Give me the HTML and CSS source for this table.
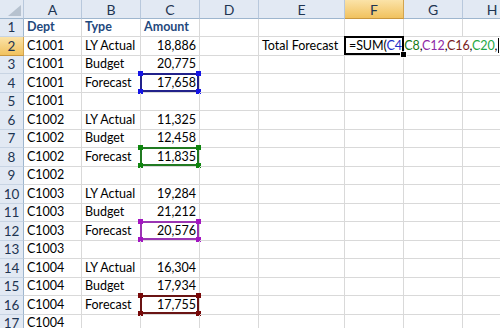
FILE: index.html
```html
<!DOCTYPE html>
<html lang="en">
<head>
    <meta charset="UTF-8">
    <title>Total Forecast</title>
    <link rel="stylesheet" href="styles.css">
</head>
<body>
    <div class="sheet">
        <div class="row head">
            <div class="corner"><span class="tri"></span></div>
            <div class="ch">A</div>
            <div class="ch">B</div>
            <div class="ch">C</div>
            <div class="ch">D</div>
            <div class="ch">E</div>
            <div class="ch on">F</div>
            <div class="ch">G</div>
            <div class="ch">H</div>
        </div>
        <div class="row">
            <div class="rh">1</div>
            <div class="c bold">Dept</div>
            <div class="c bold">Type</div>
            <div class="c bold">Amount</div>
            <div class="c"></div><div class="c"></div><div class="c"></div><div class="c"></div><div class="c"></div>
        </div>
        <div class="row">
            <div class="rh on">2</div>
            <div class="c">C1001</div>
            <div class="c">LY Actual</div>
            <div class="c num">18,886</div>
            <div class="c"></div>
            <div class="c">Total Forecast</div>
            <div class="c edit">
                <span class="active-box"><i class="fill"></i></span>
                <span class="formula">=SUM(<b class="f-blue">C4</b>,<b class="f-green">C8</b>,<b class="f-purple">C12</b>,<b class="f-red">C16</b>,<b class="f-lime">C20</b>,<i class="caret"></i></span>
            </div>
            <div class="c no-r"></div>
            <div class="c no-r"></div>
        </div>
        <div class="row">
            <div class="rh">3</div>
            <div class="c">C1001</div>
            <div class="c">Budget</div>
            <div class="c num">20,775</div>
            <div class="c"></div><div class="c"></div><div class="c"></div><div class="c"></div><div class="c"></div>
        </div>
        <div class="row">
            <div class="rh">4</div>
            <div class="c">C1001</div>
            <div class="c">Forecast</div>
            <div class="c num ref blue">17,658<span class="box"><i class="h tl"></i><i class="h tr"></i><i class="h bl"></i><i class="h br"></i></span></div>
            <div class="c"></div><div class="c"></div><div class="c"></div><div class="c"></div><div class="c"></div>
        </div>
        <div class="row">
            <div class="rh">5</div>
            <div class="c">C1001</div>
            <div class="c"></div><div class="c"></div>
            <div class="c"></div><div class="c"></div><div class="c"></div><div class="c"></div><div class="c"></div>
        </div>
        <div class="row">
            <div class="rh">6</div>
            <div class="c">C1002</div>
            <div class="c">LY Actual</div>
            <div class="c num">11,325</div>
            <div class="c"></div><div class="c"></div><div class="c"></div><div class="c"></div><div class="c"></div>
        </div>
        <div class="row">
            <div class="rh">7</div>
            <div class="c">C1002</div>
            <div class="c">Budget</div>
            <div class="c num">12,458</div>
            <div class="c"></div><div class="c"></div><div class="c"></div><div class="c"></div><div class="c"></div>
        </div>
        <div class="row">
            <div class="rh">8</div>
            <div class="c">C1002</div>
            <div class="c">Forecast</div>
            <div class="c num ref green">11,835<span class="box"><i class="h tl"></i><i class="h tr"></i><i class="h bl"></i><i class="h br"></i></span></div>
            <div class="c"></div><div class="c"></div><div class="c"></div><div class="c"></div><div class="c"></div>
        </div>
        <div class="row">
            <div class="rh">9</div>
            <div class="c">C1002</div>
            <div class="c"></div><div class="c"></div>
            <div class="c"></div><div class="c"></div><div class="c"></div><div class="c"></div><div class="c"></div>
        </div>
        <div class="row">
            <div class="rh">10</div>
            <div class="c">C1003</div>
            <div class="c">LY Actual</div>
            <div class="c num">19,284</div>
            <div class="c"></div><div class="c"></div><div class="c"></div><div class="c"></div><div class="c"></div>
        </div>
        <div class="row">
            <div class="rh">11</div>
            <div class="c">C1003</div>
            <div class="c">Budget</div>
            <div class="c num">21,212</div>
            <div class="c"></div><div class="c"></div><div class="c"></div><div class="c"></div><div class="c"></div>
        </div>
        <div class="row">
            <div class="rh">12</div>
            <div class="c">C1003</div>
            <div class="c">Forecast</div>
            <div class="c num ref purple">20,576<span class="box"><i class="h tl"></i><i class="h tr"></i><i class="h bl"></i><i class="h br"></i></span></div>
            <div class="c"></div><div class="c"></div><div class="c"></div><div class="c"></div><div class="c"></div>
        </div>
        <div class="row">
            <div class="rh">13</div>
            <div class="c">C1003</div>
            <div class="c"></div><div class="c"></div>
            <div class="c"></div><div class="c"></div><div class="c"></div><div class="c"></div><div class="c"></div>
        </div>
        <div class="row">
            <div class="rh">14</div>
            <div class="c">C1004</div>
            <div class="c">LY Actual</div>
            <div class="c num">16,304</div>
            <div class="c"></div><div class="c"></div><div class="c"></div><div class="c"></div><div class="c"></div>
        </div>
        <div class="row">
            <div class="rh">15</div>
            <div class="c">C1004</div>
            <div class="c">Budget</div>
            <div class="c num">17,934</div>
            <div class="c"></div><div class="c"></div><div class="c"></div><div class="c"></div><div class="c"></div>
        </div>
        <div class="row">
            <div class="rh">16</div>
            <div class="c">C1004</div>
            <div class="c">Forecast</div>
            <div class="c num ref red">17,755<span class="box"><i class="h tl"></i><i class="h tr"></i><i class="h bl"></i><i class="h br"></i></span></div>
            <div class="c"></div><div class="c"></div><div class="c"></div><div class="c"></div><div class="c"></div>
        </div>
        <div class="row">
            <div class="rh">17</div>
            <div class="c">C1004</div>
            <div class="c"></div><div class="c"></div>
            <div class="c"></div><div class="c"></div><div class="c"></div><div class="c"></div><div class="c"></div>
        </div>
    </div>
</body>
</html>
```

FILE: styles.css
```css
body {
    margin: 0;
    padding: 0;
    background-color: #ffffff;
    font-family: 'Lato', 'Liberation Sans', sans-serif;
    font-size: 12.5px;
    color: #000000;
    overflow: hidden;
    height: 328px;
}
.sheet {
    width: 540px;
}
.row {
    display: grid;
    grid-template-columns: 24px 58px 59px 59px 59px 86px 59px 59px 59px;
    height: 18px;
}
.row:nth-child(odd) {
    height: 19px;
}
.c {
    position: relative;
    box-sizing: border-box;
    border-right: 1px solid #d9d9d9;
    border-bottom: 1px solid #d9d9d9;
    padding: 0 3px 1px 3px;
    display: flex;
    align-items: flex-end;
    white-space: nowrap;
    line-height: 16px;
}
.c.no-r {
    border-right-color: transparent;
}
.bold {
    font-weight: bold;
    color: #1f497d;
}
.num {
    justify-content: flex-end;
}

/* headers */
.corner,
.ch,
.rh {
    box-sizing: border-box;
    background-color: #e2e9f3;
    color: #1e3552;
    border-right: 1px solid #b8c8dc;
    border-bottom: 1px solid #c8d4e3;
}
.corner {
    position: relative;
    border-bottom-color: #9eb6ce;
}
.tri {
    position: absolute;
    right: 2px;
    bottom: 2px;
    width: 0;
    height: 0;
    border-left: 13px solid transparent;
    border-bottom: 11px solid #b7c2cf;
}
.ch {
    display: flex;
    align-items: center;
    justify-content: center;
    border-bottom-color: #9eb6ce;
    padding-top: 1px;
    font-size: 14px;
}
.rh {
    display: flex;
    align-items: flex-end;
    justify-content: center;
    padding-bottom: 1px;
    line-height: 16px;
    font-size: 13.5px;
    border-right-color: #9eb6ce;
}
.ch.on,
.rh.on {
    background: linear-gradient(#fbe3a8, #f1c25f);
    border-right-color: #d2a44f;
    border-bottom-color: #c9973f;
}

/* edited cell */
.edit {
    overflow: visible;
    z-index: 2;
}
.active-box {
    position: absolute;
    top: -1px;
    left: -1px;
    right: -1px;
    bottom: 0;
    border: 2px solid #000000;
}
.fill {
    position: absolute;
    right: -5px;
    bottom: -5px;
    width: 5px;
    height: 5px;
    background-color: #000000;
    border: 1px solid #ffffff;
}
.formula {
    position: relative;
    padding-left: 1px;
    letter-spacing: -0.1px;
}
.formula b {
    font-weight: normal;
}
.f-blue { color: #1d2fc8; }
.f-green { color: #167a16; }
.f-purple { color: #8e2aa6; }
.f-red { color: #7a1c1c; }
.f-lime { color: #1fa845; }
.caret {
    display: inline-block;
    width: 1px;
    height: 15px;
    background-color: #000000;
    vertical-align: -3px;
    margin-left: 1px;
}

/* referenced ranges */
.box {
    position: absolute;
    top: -1px;
    left: -1px;
    right: 0;
    bottom: 0;
    border: 2px solid currentColor;
}
.ref.blue .box { color: #22228a; }
.ref.green .box { color: #217a21; }
.ref.purple .box { color: #9b35b3; }
.ref.red .box { color: #6a1414; }
.h {
    position: absolute;
    width: 5px;
    height: 5px;
}
.ref.blue .h { background-color: #1414e6; }
.ref.green .h { background-color: #0e850e; }
.ref.purple .h { background-color: #a315c2; }
.ref.red .h { background-color: #780808; }
.tl { top: -4px; left: -4px; }
.tr { top: -4px; right: -4px; }
.bl { bottom: -4px; left: -4px; }
.br { bottom: -4px; right: -4px; }
```
